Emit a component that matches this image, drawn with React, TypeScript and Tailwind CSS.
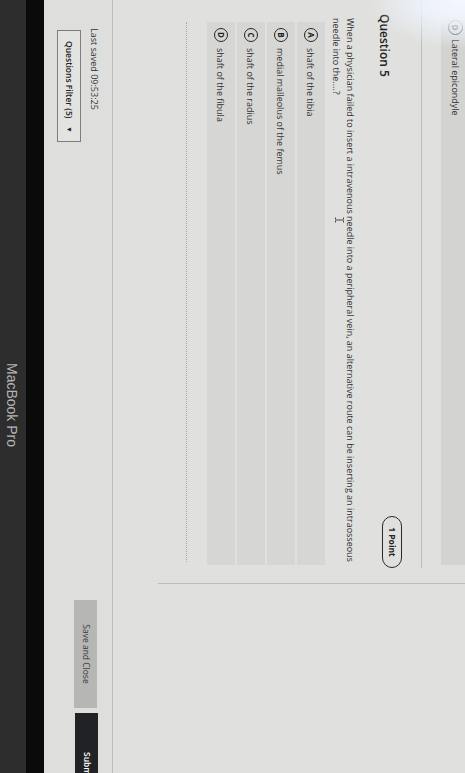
import React from "react";

function Letter({ l, size = 14 }: { l: string; size?: number }) {
  return (
    <span
      className="shrink-0 rounded-full border-[1.5px] border-[#262626] flex items-center justify-center font-bold text-[8px] leading-none text-[#222]"
      style={{ width: size, height: size }}
    >
      {l}
    </span>
  );
}

const options = [
  { l: "A", t: "shaft of the tibia" },
  { l: "B", t: "medial malleolus of the femus" },
  { l: "C", t: "shaft of the radius" },
  { l: "D", t: "shaft of the fibula" },
];

export default function App() {
  return (
    <div className="w-[465px] h-[773px] overflow-hidden bg-[#2c2c2c]">
      <div className="relative w-[773px] h-[465px] origin-top-left translate-x-[465px] rotate-90 flex flex-col font-['Open_Sans',sans-serif]">
        {/* screen */}
        <div className="h-[421px] shrink-0 flex flex-col bg-[#e0e1df] overflow-hidden">
          <main className="h-[352px] shrink-0 flex flex-col">
            <div className="h-[307px] flex">
              <section className="w-[584px] shrink-0 border-r border-[#bcbdbb] pl-[18px] pr-[15px] flex flex-col">
                {/* previous question's last option */}
                <div className="h-[24px] ml-[2px] mr-[3px] bg-[#d3d4d2] flex items-start pt-[2px] gap-[4px]">
                  <Letter l="D" size={15} />
                  <span className="text-[9px] leading-[15px] text-[#333]">Lateral epicondyle</span>
                </div>
                <div className="mt-[19px] -ml-[18px] h-px bg-[#bdbebc]" />

                {/* header */}
                <div className="mt-[19px] flex justify-between items-start">
                  <h2 className="mt-[11px] -ml-[4px] text-[12px] leading-[14px] font-semibold text-[#222]">
                    Question 5
                  </h2>
                  <span className="h-[20px] w-[52px] rounded-full border-[1.5px] border-[#2a2a2a] flex items-center justify-center text-[8.5px] font-bold text-[#222]">
                    1 Point
                  </span>
                </div>

                {/* question text */}
                <div className="relative mt-[20px] text-[9px] leading-[13.5px] text-[#333] whitespace-nowrap">
                  <p>
                    When a physician failed to insert a intravenous needle into a peripheral vein, an alternative route can be inserting an intraosseous
                  </p>
                  <p>needle into the....?</p>
                  <svg
                    className="absolute left-[199px] top-[13px]"
                    width="6"
                    height="9"
                    viewBox="0 0 6 9"
                  >
                    <path d="M0.5 0.5 H2.5 M3.5 0.5 H5.5 M3 0.8 V8.2 M0.5 8.5 H2.5 M3.5 8.5 H5.5" stroke="#333" strokeWidth="0.9" fill="none" />
                  </svg>
                </div>

                {/* options */}
                <div className="mt-[5px] ml-[4px] mr-[3px] flex flex-col gap-[2px]">
                  {options.map((o) => (
                    <div key={o.l} className="h-[28px] bg-[#d6d7d5] flex items-center pl-[6px] gap-[6px]">
                      <Letter l={o.l} />
                      <span className="text-[9px] leading-none text-[#333]">{o.t}</span>
                    </div>
                  ))}
                </div>

                <div className="mt-[20px] ml-[4px] mr-[6px] border-t border-dotted border-[#a9aaa8]" />
              </section>
              <div className="flex-1" />
            </div>
          </main>

          {/* footer */}
          <footer className="flex-1 border-t border-[#bcbdbb] bg-[#dedfdd] flex justify-between">
            <div className="pl-[28px] pt-[12px] flex flex-col">
              <span className="text-[9px] leading-[12px] text-[#333]">Last saved 09:53:25</span>
              <button className="mt-[7px] ml-[2px] w-[112px] h-[24px] border border-[#7d7e7c] bg-[#e3e4e2] flex items-center justify-between pl-[10px] pr-[8px] text-[8.5px] font-semibold text-[#222]">
                <span>Questions Filter (5)</span>
                <span className="text-[7px]">▼</span>
              </button>
            </div>
            <div className="pt-[15px] flex items-start gap-[5px] -mr-[20px]">
              <button className="w-[108px] h-[23px] bg-[#b6b7b5] text-[8.5px] text-[#3a3a3a] flex items-center justify-center">
                Save and Close
              </button>
              <button className="mt-[-1px] w-[80px] h-[23px] bg-[#202225] text-[8.5px] font-semibold text-white flex items-center pl-[39px]">
                Submit
              </button>
            </div>
          </footer>
        </div>

        {/* bezel */}
        <div className="h-[18px] shrink-0 bg-[#0a0a0a]" />
        <div className="flex-1 bg-[#2d2d2d] pl-[363px] pt-[1px]">
          <span className="font-['Liberation_Sans',sans-serif] text-[14px] leading-[16px] text-[#b5b5b5]">
            MacBook Pro
          </span>
        </div>

        {/* screen glare */}
        <div className="pointer-events-none absolute left-0 top-0 w-[48px] h-[95px] bg-[radial-gradient(ellipse_100%_100%_at_0%_0%,rgba(246,249,255,0.97)_0%,rgba(238,243,252,0.85)_50%,rgba(230,235,245,0)_100%)]" />
      </div>
    </div>
  );
}
